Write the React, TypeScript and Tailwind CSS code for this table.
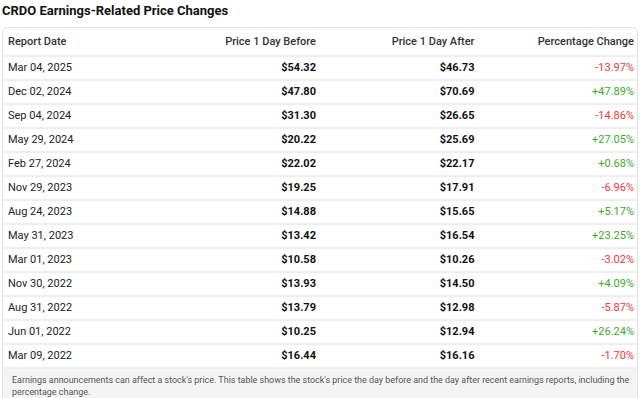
const rows = [
  ["Mar 04, 2025", "$54.32", "$46.73", "-13.97%"],
  ["Dec 02, 2024", "$47.80", "$70.69", "+47.89%"],
  ["Sep 04, 2024", "$31.30", "$26.65", "-14.86%"],
  ["May 29, 2024", "$20.22", "$25.69", "+27.05%"],
  ["Feb 27, 2024", "$22.02", "$22.17", "+0.68%"],
  ["Nov 29, 2023", "$19.25", "$17.91", "-6.96%"],
  ["Aug 24, 2023", "$14.88", "$15.65", "+5.17%"],
  ["May 31, 2023", "$13.42", "$16.54", "+23.25%"],
  ["Mar 01, 2023", "$10.58", "$10.26", "-3.02%"],
  ["Nov 30, 2022", "$13.93", "$14.50", "+4.09%"],
  ["Aug 31, 2022", "$13.79", "$12.98", "-5.87%"],
  ["Jun 01, 2022", "$10.25", "$12.94", "+26.24%"],
  ["Mar 09, 2022", "$16.44", "$16.16", "-1.70%"],
];

export default function App() {
  return (
    <div className="h-[398px] w-[640px] overflow-hidden bg-white px-[2px] font-['Roboto',sans-serif] text-[#222]">
      <h2 className="pt-[3px] text-[13px] font-bold leading-[16px] text-[#111]">
        CRDO Earnings-Related Price Changes
      </h2>
      <div className="mt-[8px] overflow-hidden rounded-t-[6px] border border-[#e4e4e4]">
        <table className="w-full table-fixed border-collapse text-[11px]">
          <thead>
            <tr className="h-[28px] border-b-2 border-[#eeeeee]">
              <th className="pl-[5px] pt-[1px] text-left font-medium text-[#333]">Report Date</th>
              <th className="pr-[4px] pt-[1px] text-right font-medium text-[#333]">Price 1 Day Before</th>
              <th className="pr-[4px] pt-[1px] text-right font-medium text-[#333]">Price 1 Day After</th>
              <th className="pr-[3px] pt-[1px] text-right font-medium text-[#333]">Percentage Change</th>
            </tr>
          </thead>
          <tbody>
            {rows.map(([d, b, a, p]) => (
              <tr key={d} className="h-[24px] border-b-2 border-[#eeeeee]">
                <td className="pl-[5px] text-[#222]">{d}</td>
                <td className="pr-[4px] text-right font-bold text-[#111]">{b}</td>
                <td className="pr-[4px] text-right font-bold text-[#111]">{a}</td>
                <td
                  className={
                    p.startsWith("-")
                      ? "pr-[3px] text-right text-[#f0383b]"
                      : "pr-[3px] text-right text-[#3eaa2c]"
                  }
                >
                  {p}
                </td>
              </tr>
            ))}
          </tbody>
        </table>
        <p className="bg-[#f4f4f4] pl-[9px] pr-[4px] pt-[5px] pb-[10px] text-[8.95px] leading-[12px] text-[#555]">
          Earnings announcements can affect a stock's price. This table shows the stock's price the day before and the day after recent earnings reports, including the percentage change.
        </p>
      </div>
    </div>
  );
}
